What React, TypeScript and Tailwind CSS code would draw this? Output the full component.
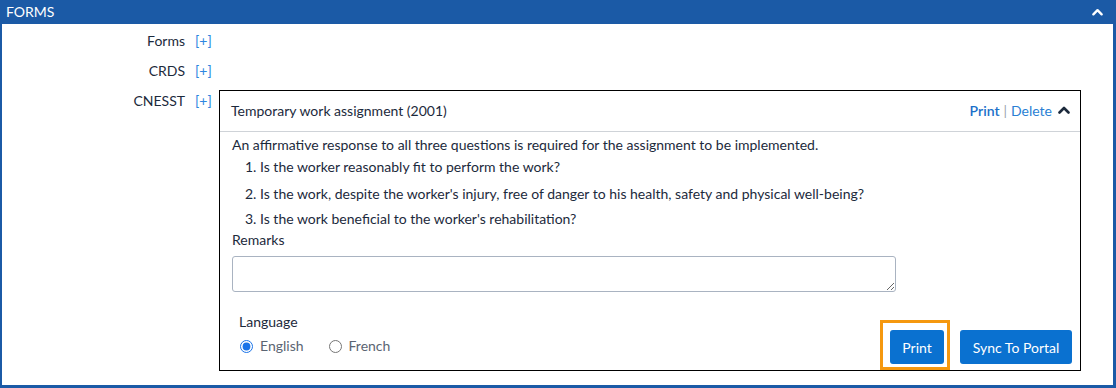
import { useState } from 'react';

const FONT = { fontFamily: '"Lato", "Open Sans", Arial, sans-serif' };

function Chevron({ className }: { className?: string }) {
  return (
    <svg viewBox="0 0 12 8" className={className} fill="none" stroke="currentColor" strokeWidth="2.6" strokeLinecap="round" strokeLinejoin="round">
      <path d="M1.5 6.5 6 2l4.5 4.5" />
    </svg>
  );
}

function Label({ text }: { text: string }) {
  return (
    <div className="w-[217px] flex items-center h-[30px] shrink-0">
      <span className="w-[183px] text-right text-[14px] text-[#1c2a3c]">{text}</span>
      <span className="ml-[10px] text-[14px] text-[#2d86e0]">[+]</span>
    </div>
  );
}

export default function App() {
  const [lang, setLang] = useState('en');

  return (
    <div className="w-[1116px] h-[388px] bg-white" style={FONT}>
      <div className="h-full flex flex-col border-l-2 border-r-[3px] border-b-[3px] border-[#1b5aa6]">
        <div className="h-[24px] bg-[#1b5aa6] flex items-center justify-between pl-[4px] pr-[10px] pb-[1px] shrink-0">
          <span className="text-white text-[14px]">FORMS</span>
          <Chevron className="w-[11px] h-[8px] text-white" />
        </div>

        <div className="flex-1 pt-[1px]">
          <Label text="Forms" />
          <Label text="CRDS" />
          <div className="flex items-start">
            <Label text="CNESST" />

            <div className="mt-[5px] w-[862px] h-[281px] border border-black flex flex-col text-[14px] text-[#1c2a3c]">
              <div className="h-[41px] shrink-0 flex items-center justify-between pl-[11px] pr-[10px] pb-[2px] border-b border-[#cfd3d8]">
                <span>Temporary work assignment (2001)</span>
                <div className="flex items-center">
                  <span className="text-[#1a6fc9] font-semibold">Print</span>
                  <span className="mx-[4px] text-[#9aa3ad]">|</span>
                  <span className="text-[#2a7fd4]">Delete</span>
                  <Chevron className="w-[12px] h-[8px] ml-[6px] text-[#1c2a3c]" />
                </div>
              </div>

              <div className="flex-1 pl-[12px] pr-[8px] pt-[2px] flex flex-col">
                <p className="leading-[22px]">An affirmative response to all three questions is required for the assignment to be implemented.</p>
                <ol className="pl-[13px]">
                  <li className="leading-[22px]">1. Is the worker reasonably fit to perform the work?</li>
                  <li className="leading-[25px] mt-[3px]">2. Is the work, despite the worker's injury, free of danger to his health, safety and physical well-being?</li>
                  <li className="leading-[25px]">3. Is the work beneficial to the worker's rehabilitation?</li>
                </ol>
                <label className="leading-[18px]">Remarks</label>
                <textarea className="mt-[7px] w-[664px] h-[36px] border border-[#a9b3c1] rounded-[3px] resize-y shrink-0" />

                <div className="flex-1 flex items-end justify-between">
                  <div className="pl-[7px] pb-[15px]">
                    <div className="leading-[18px]">Language</div>
                    <div className="flex items-center mt-[6px] leading-[18px]">
                      <label className="flex items-center gap-[7px] cursor-pointer">
                        <input
                          type="radio"
                          name="lang"
                          checked={lang === 'en'}
                          onChange={() => setLang('en')}
                          className="w-[13px] h-[13px] accent-[#1a73e8] m-0 ml-[1px]"
                        />
                        <span className="text-[#5b6573]">English</span>
                      </label>
                      <label className="flex items-center gap-[7px] cursor-pointer ml-[25px]">
                        <input
                          type="radio"
                          name="lang"
                          checked={lang === 'fr'}
                          onChange={() => setLang('fr')}
                          className="w-[13px] h-[13px] accent-[#1a73e8] m-0"
                        />
                        <span className="text-[#5b6573]">French</span>
                      </label>
                    </div>
                  </div>

                  <div className="flex items-end">
                    <div className="border-[3px] border-[#f5980f] pt-[7px] pl-[7px] pr-[3px] pb-[3px]">
                      <button className="w-[54px] h-[34px] bg-[#0a71d0] text-white rounded-[3px] block">Print</button>
                    </div>
                    <button className="ml-[10px] mb-[6px] w-[112px] h-[34px] bg-[#0a71d0] text-white rounded-[3px]">Sync To Portal</button>
                  </div>
                </div>
              </div>
            </div>
          </div>
        </div>
      </div>
    </div>
  );
}
